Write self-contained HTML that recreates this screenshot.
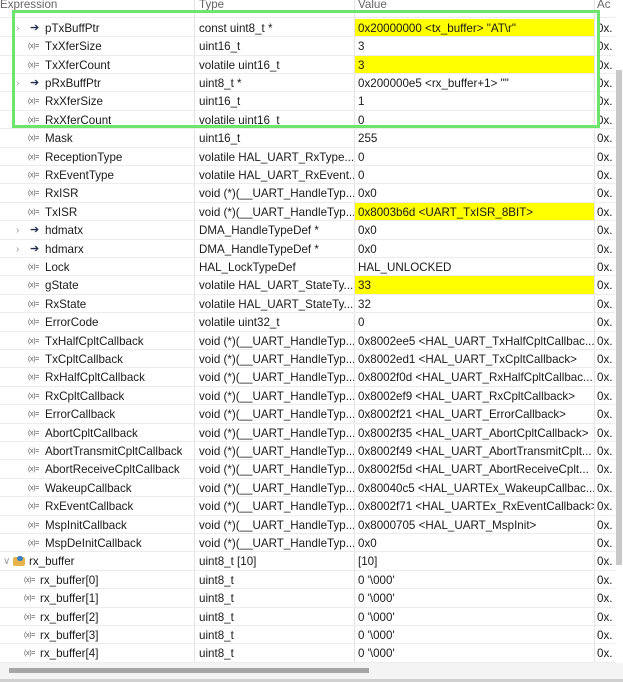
<!DOCTYPE html>
<html><head><style>
body{margin:0;width:623px;height:682px;overflow:hidden;background:#fff;font-family:"Liberation Sans",sans-serif;font-size:11.6px;color:#1a1a1a;position:relative}
.r{position:absolute;left:0;width:615px;height:18.4px;border-bottom:1px solid #ececec;box-sizing:border-box}
.c{position:absolute;top:0;height:100%;line-height:19px;white-space:nowrap;overflow:hidden}
.n{left:0;width:194px}
.t{left:195px;width:159px;padding-left:4px;box-sizing:border-box}
.v{left:355px;width:239px;padding-left:3px;box-sizing:border-box}
.a{left:595px;width:20px;padding-left:2px;box-sizing:border-box}
.y{background:#ffff00}
.d{position:absolute;top:0;width:1px;height:663px;background:#e4e4e4}
.ic{position:absolute;font-size:7px;color:#555;top:0;letter-spacing:-0.3px}
.ar{position:absolute;top:0;color:#1f2d4a;font-size:11px}
.ch{position:absolute;top:0;color:#999;font-size:10px}
</style></head><body>
<div class="d" style="left:194px"></div><div class="d" style="left:354px"></div><div class="d" style="left:594px"></div>
<div class="r" style="top:-6px;color:#666;height:24px"><div class="c n" style="line-height:22px">Expression</div><div class="c t" style="line-height:22px">Type</div><div class="c v" style="line-height:22px">Value</div><div class="c a" style="line-height:22px">Ac</div></div>
<div id="rows"></div>
<div style="position:absolute;left:12px;top:10px;width:582px;height:112px;border:3px solid #6de56d"></div>
<div style="position:absolute;left:616px;top:70px;width:6px;height:495px;background:#c8c8c8"></div>
<div style="position:absolute;left:0;top:663px;width:623px;height:17px;background:#f4f4f4"></div>
<div style="position:absolute;left:9px;top:668px;width:360px;height:5px;background:#a6a6a6"></div>
<div style="position:absolute;left:0;top:679px;width:623px;height:3px;background:#d0d0d0"></div>
<script>
var U='void (*)(__UART_HandleTyp...';
var R=[
['p','pTxBuffPtr','const uint8_t *','0x20000000 &lt;tx_buffer&gt; "AT\\r"',1],
['v','TxXferSize','uint16_t','3'],
['v','TxXferCount','volatile uint16_t','3',1],
['p','pRxBuffPtr','uint8_t *','0x200000e5 &lt;rx_buffer+1&gt; ""'],
['v','RxXferSize','uint16_t','1'],
['v','RxXferCount','volatile uint16_t','0'],
['v','Mask','uint16_t','255'],
['v','ReceptionType','volatile HAL_UART_RxType...','0'],
['v','RxEventType','volatile HAL_UART_RxEvent...','0'],
['v','RxISR',U,'0x0'],
['v','TxISR',U,'0x8003b6d &lt;UART_TxISR_8BIT&gt;',1],
['p','hdmatx','DMA_HandleTypeDef *','0x0'],
['p','hdmarx','DMA_HandleTypeDef *','0x0'],
['v','Lock','HAL_LockTypeDef','HAL_UNLOCKED'],
['v','gState','volatile HAL_UART_StateTy...','33',1],
['v','RxState','volatile HAL_UART_StateTy...','32'],
['v','ErrorCode','volatile uint32_t','0'],
['v','TxHalfCpltCallback',U,'0x8002ee5 &lt;HAL_UART_TxHalfCpltCallbac...'],
['v','TxCpltCallback',U,'0x8002ed1 &lt;HAL_UART_TxCpltCallback&gt;'],
['v','RxHalfCpltCallback',U,'0x8002f0d &lt;HAL_UART_RxHalfCpltCallbac...'],
['v','RxCpltCallback',U,'0x8002ef9 &lt;HAL_UART_RxCpltCallback&gt;'],
['v','ErrorCallback',U,'0x8002f21 &lt;HAL_UART_ErrorCallback&gt;'],
['v','AbortCpltCallback',U,'0x8002f35 &lt;HAL_UART_AbortCpltCallback&gt;'],
['v','AbortTransmitCpltCallback',U,'0x8002f49 &lt;HAL_UART_AbortTransmitCplt...'],
['v','AbortReceiveCpltCallback',U,'0x8002f5d &lt;HAL_UART_AbortReceiveCplt...'],
['v','WakeupCallback',U,'0x80040c5 &lt;HAL_UARTEx_WakeupCallbac...'],
['v','RxEventCallback',U,'0x8002f71 &lt;HAL_UARTEx_RxEventCallback&gt;'],
['v','MspInitCallback',U,'0x8000705 &lt;HAL_UART_MspInit&gt;'],
['v','MspDeInitCallback',U,'0x0'],
['f','rx_buffer','uint8_t [10]','[10]'],
['c','rx_buffer[0]','uint8_t','0 \'\\000\''],
['c','rx_buffer[1]','uint8_t','0 \'\\000\''],
['c','rx_buffer[2]','uint8_t','0 \'\\000\''],
['c','rx_buffer[3]','uint8_t','0 \'\\000\''],
['c','rx_buffer[4]','uint8_t','0 \'\\000\'']];
var h='';
R.forEach(function(r,i){
var top=18.8+i*18.4,n='';
if(r[0]=='v')n='<span class="ic" style="left:28px;line-height:19px">(x)=</span><span class="c" style="left:45px">'+r[1]+'</span>';
if(r[0]=='p')n='<span class="ch" style="left:16px;line-height:19px">&#x203A;</span><span class="ar" style="left:30px;line-height:19px">&#x2794;</span><span class="c" style="left:45px">'+r[1]+'</span>';
if(r[0]=='f')n='<span class="ch" style="left:3px;line-height:19px">&#x2228;</span><span style="position:absolute;left:13px;top:5px;width:12px;height:9px;background:#e8b34a;border-radius:2px"></span><span style="position:absolute;left:17px;top:4px;width:6px;height:5px;background:#3a7fc1;border-radius:3px"></span><span class="c" style="left:29px">'+r[1]+'</span>';
if(r[0]=='c')n='<span class="ic" style="left:24px;line-height:19px">(x)=</span><span class="c" style="left:40px">'+r[1]+'</span>';
h+='<div class="r" style="top:'+top+'px"><div class="c n">'+n+'</div><div class="c t">'+r[2]+'</div><div class="c v'+(r[4]?' y':'')+'">'+r[3]+'</div><div class="c a">0x.</div></div>';
});
document.getElementById('rows').innerHTML=h;
</script>
</body></html>
